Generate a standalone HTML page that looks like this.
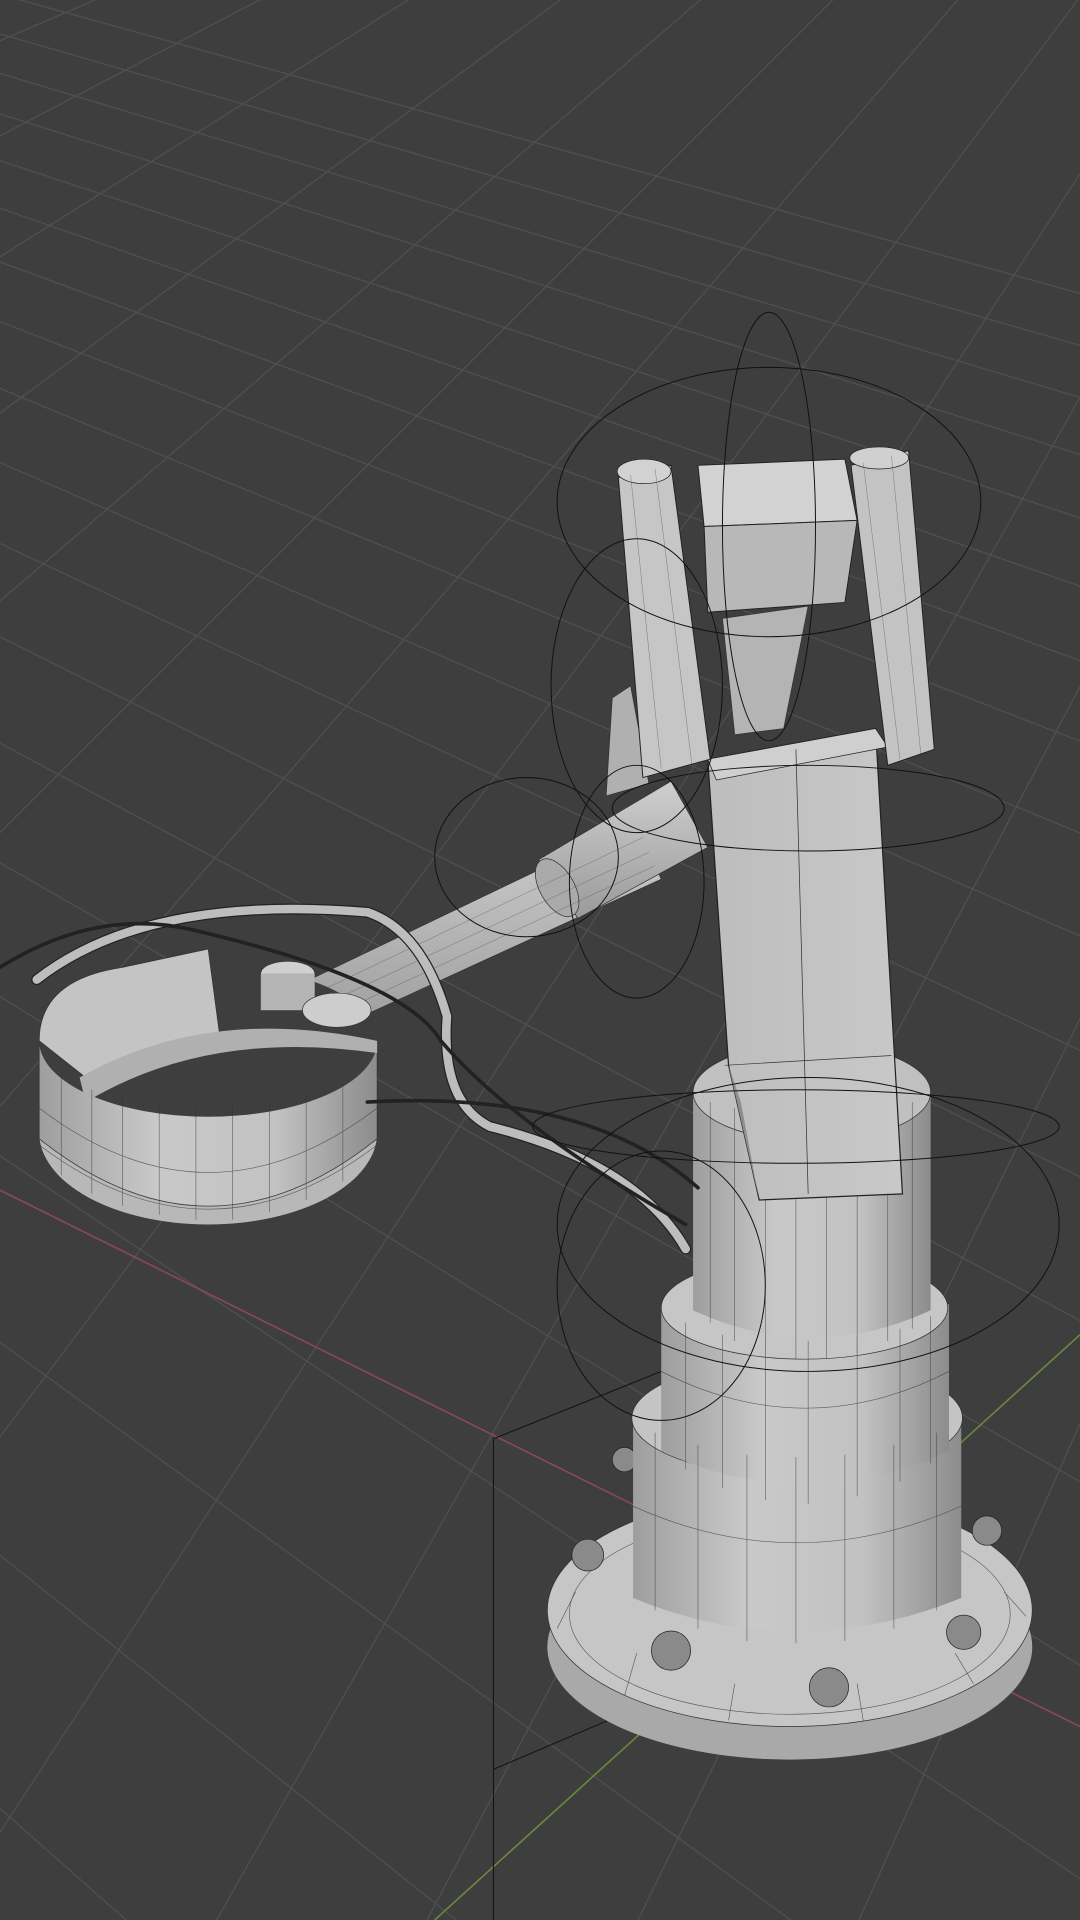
<!DOCTYPE html>
<html><head><meta charset="utf-8"><style>
html,body{margin:0;padding:0;background:#3e3e3e;overflow:hidden;width:1080px;height:1920px}
svg{display:block}
</style></head><body>
<svg width="1080" height="1920" viewBox="0 0 882 1568" xmlns="http://www.w3.org/2000/svg">
<defs>
<linearGradient id="cyl" x1="0" x2="1" y1="0" y2="0">
<stop offset="0" stop-color="#9e9e9e"/><stop offset="0.35" stop-color="#c9c9c9"/><stop offset="0.7" stop-color="#c2c2c2"/><stop offset="1" stop-color="#8c8c8c"/>
</linearGradient>
<linearGradient id="box" x1="0" x2="1"><stop offset="0" stop-color="#bdbdbd"/><stop offset="1" stop-color="#c8c8c8"/></linearGradient>
<linearGradient id="tube" x1="0" x2="0" y1="0" y2="1"><stop offset="0" stop-color="#cfcfcf"/><stop offset="1" stop-color="#9a9a9a"/></linearGradient>
</defs>
<rect width="882" height="1568" fill="#3e3e3e"/>
<!-- grid -->
<g stroke="#4f4f4f" stroke-width="1.1" fill="none">
<path d="M-200,-60 L1100,300 M-200,-30 L1100,345 M-200,0 L1100,390 M-200,30 L1100,440 M-200,65 L1100,495 M-200,100 L1100,555 M-200,140 L1100,620 M-200,185 L1100,690 M-200,235 L1100,770 M-200,290 L1100,860 M-200,350 L1100,960 M-200,420 L1100,1070 M-200,500 L1100,1195 M-200,590 L1100,1335 M-200,690 L1100,1495 M-200,810 L1100,1680 M-200,950 L1100,1900 M-200,1110 L1100,2150 M-200,1300 L1100,2450"/>
<path d="M-900,420 L380,-130 M-800,530 L460,-130 M-700,650 L540,-130 M-600,780 L620,-120 M-500,920 L700,-110 M-400,1080 L780,-100 M-300,1250 L860,-90 M-200,1440 L940,-80 M-100,1650 L1020,-70 M0,1880 L1100,-60 M120,2000 L1200,-40 M260,2100 L1300,-20 M420,2200 L1400,0 M600,2300 L1500,20"/>
</g>
<line x1="0" y1="972" x2="882" y2="1410" stroke="#8a4a52" stroke-width="1.3"/>
<line x1="355" y1="1568" x2="882" y2="1090" stroke="#6a8a3a" stroke-width="1.3"/>
<g stroke="#111" stroke-width="0.8" fill="none">
<path d="M403,1175 L403,1568 M403,1175 L540,1120 M403,1445 L520,1395"/>
</g>
<!-- base flange -->
<ellipse cx="645" cy="1345" rx="198" ry="92" fill="#a9a9a9"/>
<ellipse cx="645" cy="1315" rx="198" ry="95" fill="#c6c6c6" stroke="#333" stroke-width="0.6"/>
<g stroke="#555" stroke-width="0.5" fill="none">
<ellipse cx="645" cy="1318" rx="180" ry="82"/>
<path d="M470,1300 L455,1330 M520,1350 L510,1385 M600,1375 L595,1405 M700,1375 L705,1405 M780,1350 L795,1375 M820,1300 L838,1320"/>
</g>
<g fill="#8a8a8a" stroke="#222" stroke-width="0.6">
<circle cx="480" cy="1270" r="13"/><circle cx="548" cy="1348" r="16"/><circle cx="677" cy="1378" r="16"/><circle cx="787" cy="1333" r="14"/><circle cx="806" cy="1250" r="12"/><circle cx="510" cy="1192" r="10"/>
</g>
<!-- lower cylinder -->
<path d="M517,1155 L517,1305 Q650,1360 785,1305 L785,1155 Z" fill="url(#cyl)"/>
<ellipse cx="651" cy="1158" rx="135" ry="48" fill="#c4c4c4" stroke="#333" stroke-width="0.6"/>
<path d="M540,1065 L540,1185 Q658,1240 775,1185 L775,1065 Z" fill="url(#cyl)"/>
<ellipse cx="657" cy="1068" rx="117" ry="42" fill="#c6c6c6" stroke="#333" stroke-width="0.6"/>
<path d="M566,890 L566,1070 Q663,1115 760,1070 L760,890 Z" fill="url(#cyl)"/>
<ellipse cx="663" cy="892" rx="97" ry="40" fill="#c0c0c0" stroke="#333" stroke-width="0.6"/>
<g stroke="#333" stroke-width="0.5" fill="none" opacity="0.7">
<path d="M580,900 V1080 M600,905 V1095 M625,910 V1105 M650,912 V1110 M675,912 V1110 M700,910 V1105 M725,905 V1095 M745,900 V1085"/>
<path d="M540,1120 Q658,1180 775,1120 M517,1230 Q650,1290 785,1230"/>
<path d="M560,1080 V1200 M590,1090 V1215 M625,1095 V1225 M660,1095 V1228 M700,1092 V1222 M735,1085 V1210 M760,1075 V1195"/>
<path d="M535,1170 V1315 M570,1180 V1330 M610,1188 V1340 M650,1190 V1342 M690,1188 V1340 M730,1180 V1330 M765,1170 V1315"/>
</g>
<!-- forearm tube -->
<path d="M228,812 L520,672 L540,718 L248,852 Z" fill="url(#tube)" stroke="#333" stroke-width="0.6"/>
<path d="M440,702 L548,638 L578,692 L472,750 Z" fill="url(#tube)" stroke="#333" stroke-width="0.6"/>
<ellipse cx="455" cy="725" rx="14" ry="26" transform="rotate(-30 455 725)" fill="#aaa" stroke="#333" stroke-width="0.6"/>
<g stroke="#444" stroke-width="0.4" opacity="0.6"><path d="M235,822 L525,684 M240,832 L530,696 M244,842 L535,707"/></g>
<!-- upper arm box -->
<path d="M578,620 L715,595 L737,975 L620,980 L595,870 Z" fill="url(#box)" stroke="#222" stroke-width="1"/>
<path d="M578,620 L715,595 L725,610 L585,637 Z" fill="#cfcfcf" stroke="#222" stroke-width="0.6"/>
<path d="M592,870 L728,862 M650,612 L660,975" stroke="#333" stroke-width="0.6" fill="none"/>
<path d="M595,870 L620,980 L605,900 Z" fill="#8e8e8e"/>
<path d="M590,505 L660,495 L640,595 L600,600 Z" fill="#b4b4b4" stroke="#333" stroke-width="0.6"/>
<path d="M500,570 L515,560 L530,640 L495,650 Z" fill="#b0b0b0" stroke="#333" stroke-width="0.6"/>
<!-- fork posts -->
<path d="M505,390 L548,380 L580,620 L525,635 Z" fill="#c6c6c6" stroke="#222" stroke-width="0.8"/>
<ellipse cx="526" cy="385" rx="22" ry="10" fill="#d2d2d2" stroke="#222" stroke-width="0.6"/>
<path d="M695,380 L742,368 L763,612 L725,625 Z" fill="#c3c3c3" stroke="#222" stroke-width="0.8"/>
<ellipse cx="718" cy="374" rx="24" ry="9" fill="#d0d0d0" stroke="#222" stroke-width="0.6"/>
<g stroke="#444" stroke-width="0.4" opacity="0.6" fill="none"><path d="M515,388 L540,628 M535,383 L565,624 M705,378 L735,620 M728,372 L752,616"/></g>
<path d="M570,380 L690,375 L700,425 L575,430 Z" fill="#d2d2d2" stroke="#222" stroke-width="0.8"/>
<path d="M575,430 L700,425 L690,492 L578,500 Z" fill="#b8b8b8" stroke="#222" stroke-width="0.8"/>
<!-- gripper ring -->
<ellipse cx="170" cy="925" rx="138" ry="75" fill="#b8b8b8"/>
<path d="M32,850 L32,930 Q170,1040 308,930 L308,850 Z" fill="url(#cyl)" stroke="#333" stroke-width="0.6"/>
<ellipse cx="170" cy="850" rx="138" ry="62" fill="#3e3e3e"/>
<path d="M32,850 Q32,800 100,790 L170,775 L180,850 Q120,850 70,880 Z" fill="#c4c4c4" stroke="#333" stroke-width="0.6"/>
<path d="M65,880 Q170,820 308,850 L308,860 Q170,840 70,900 Z" fill="#b0b0b0"/>
<g stroke="#333" stroke-width="0.5" fill="none" opacity="0.7">
<path d="M50,880 V960 M75,890 V975 M100,895 V985 M130,898 V992 M160,900 V996 M190,900 V996 M220,898 V990 M250,893 V980 M280,885 V965 M32,905 Q170,1010 308,905 M32,935 Q170,1040 308,935"/>
</g>
<ellipse cx="235" cy="795" rx="22" ry="10" fill="#d0d0d0" stroke="#333" stroke-width="0.6"/>
<rect x="213" y="795" width="44" height="30" fill="#b4b4b4"/>
<ellipse cx="275" cy="825" rx="28" ry="14" fill="#cdcdcd" stroke="#333" stroke-width="0.6"/>
<!-- cables -->
<g fill="none" stroke-linecap="round">
<path d="M30,800 Q120,730 300,745 Q345,760 365,830 Q360,900 400,920 Q520,950 560,1020" stroke="#222" stroke-width="9"/>
<path d="M30,800 Q120,730 300,745 Q345,760 365,830 Q360,900 400,920 Q520,950 560,1020" stroke="#bdbdbd" stroke-width="7"/>
<path d="M0,790 Q80,740 160,760 Q330,800 360,850 Q420,920 560,1000" stroke="#222" stroke-width="3"/>
<path d="M300,900 Q480,890 570,970" stroke="#222" stroke-width="3"/>
</g>
<g stroke="#111" stroke-width="0.8" fill="none">
<ellipse cx="628" cy="410" rx="173" ry="110"/>
<ellipse cx="628" cy="430" rx="38" ry="175"/>
<ellipse cx="430" cy="700" rx="75" ry="65"/>
<ellipse cx="520" cy="720" rx="55" ry="95"/>
<ellipse cx="660" cy="660" rx="160" ry="35"/>
<ellipse cx="660" cy="1000" rx="205" ry="120"/>
<ellipse cx="540" cy="1050" rx="85" ry="110"/>
<ellipse cx="650" cy="920" rx="215" ry="30"/>
<ellipse cx="520" cy="560" rx="70" ry="120"/>
</g>
</svg>
</body></html>
